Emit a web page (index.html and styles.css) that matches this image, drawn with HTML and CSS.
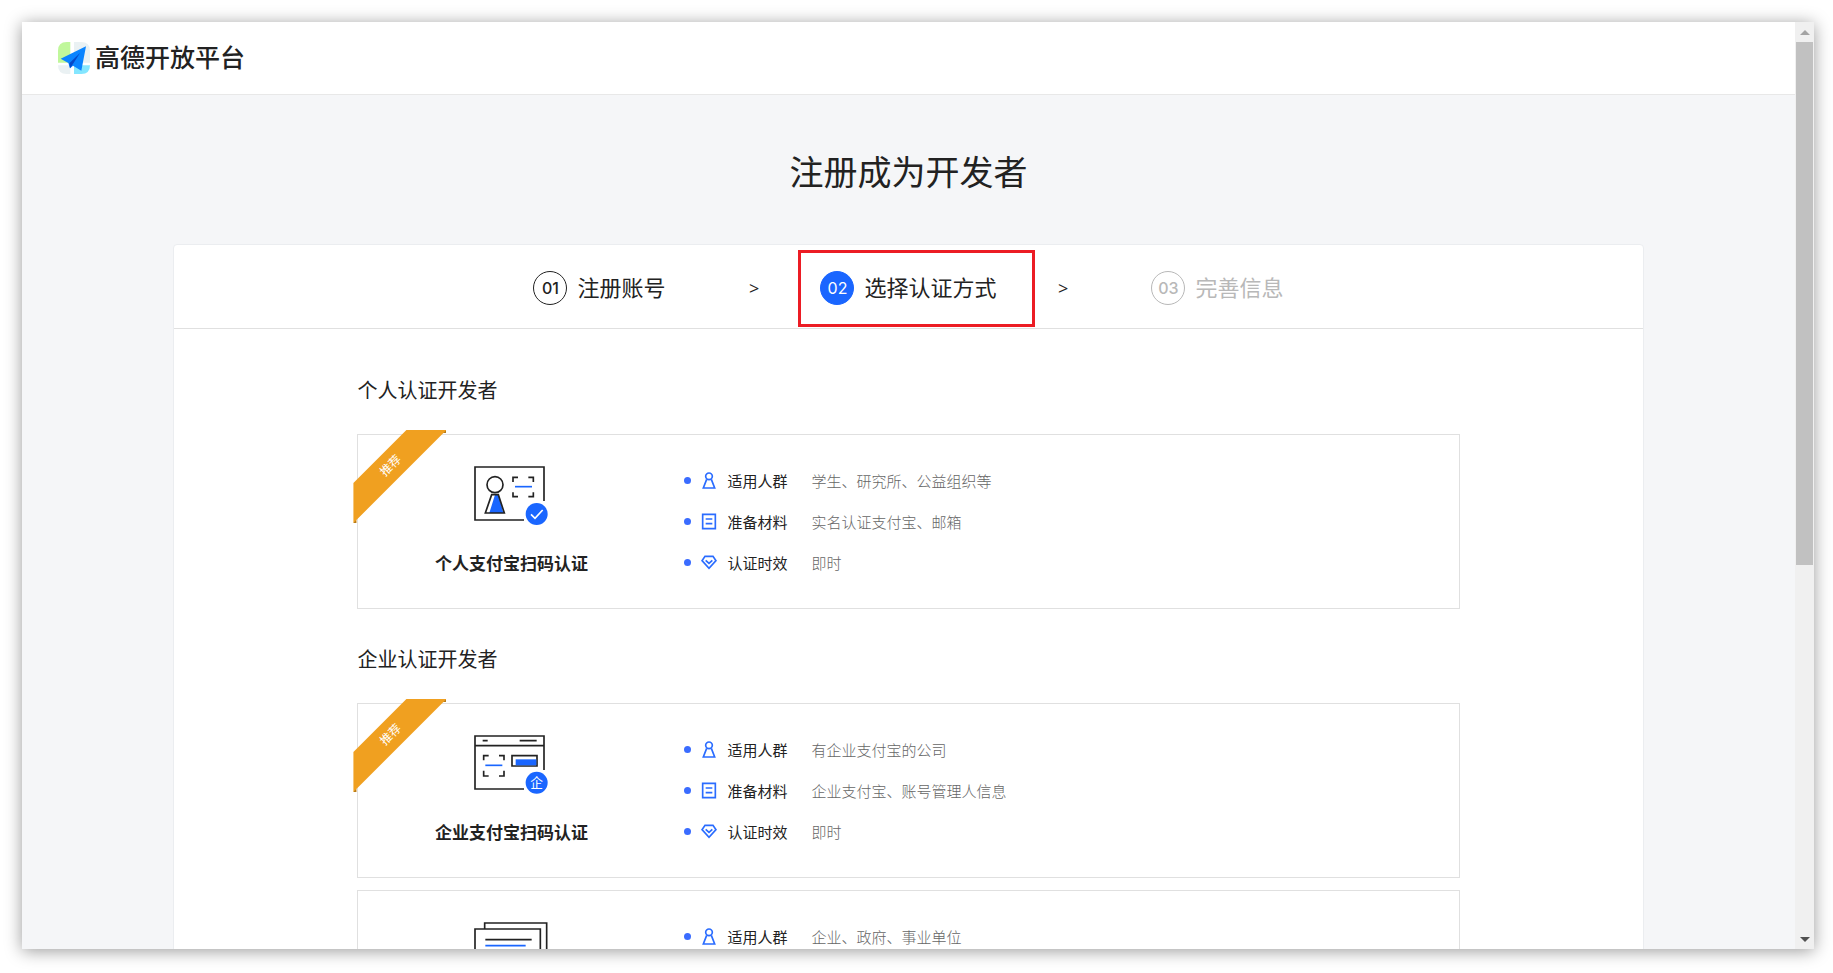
FILE: index.html
```
<!DOCTYPE html>
<html lang="zh-CN">
  <head>
    <meta charset="utf-8">
    <title>高德开放平台</title>
    <link rel="stylesheet" href="styles.css">
  </head>
  <body>
    <!-- shared icons -->
    <svg class="sprite" aria-hidden="true">
      <symbol id="icon-user" viewBox="0 0 48 51">
        <circle cx="24" cy="13" r="10"/>
        <path d="M17 22L7 48H41L31 22"/>
      </symbol>
      <symbol id="icon-doc" viewBox="0 0 48 51">
        <path d="M5 4H43V47H5ZM14 18H34M14 32H34"/>
      </symbol>
      <symbol id="icon-time" viewBox="0 0 48 51">
        <path d="M12 7H36L45 20L24 43L3 20ZM14 19L24 28L34 19"/>
      </symbol>
    </svg>
    <div class="window">
      <div class="page">
        <header class="header">
          <a class="logo" href="#">
            <svg class="logo-mark" viewBox="0 0 96 96">
              <path fill="#c0f79b" d="M26 0H37V62H0V26Q0 0 26 0Z"/>
              <path fill="#eaf1f3" d="M48 0H70Q96 0 96 26V62H48ZM0 70H37V96H26Q0 96 0 70Z"/>
              <path fill="#84e6ff" d="M48 70H96Q96 96 70 96H48Z"/>
              <path fill="#0a84ff" d="M84 13L8 50L31 63L36 79L45 71L70 86Z"/>
              <path fill="#0648c8" d="M66 33L34 64L36 79L43 69Z"/>
            </svg>
            <span>高德开放平台</span>
          </a>
        </header>
        <main>
          <h1>注册成为开发者</h1>
          <div class="panel">
            <ol class="steps">
              <li class="step"><span class="num">01</span>注册账号</li>
              <li class="arrow">&gt;</li>
              <li class="step current"><span class="num">02</span>选择认证方式</li>
              <li class="arrow">&gt;</li>
              <li class="step disabled"><span class="num">03</span>完善信息</li>
            </ol>
            <div class="content">
              <h2>个人认证开发者</h2>
              <div class="card">
                <div class="ribbon"><span>推荐</span></div>
                <div class="type">
                  <svg class="type-icon" viewBox="0 0 225 180">
                    <path class="line" d="M210 105V3H3V162H150"/>
                    <circle class="line" cx="63" cy="56" r="24"/>
                    <path class="blue" d="M63 86H74L88 141H46Z"/>
                    <path class="line" d="M53 86H73L91 141H34Z"/>
                    <path class="line" d="M117 48V34H132M163 34H178V48M178 79V92H163M132 92H117V79"/>
                    <path class="blue-line" d="M123 62H174"/>
                    <circle class="blue" cx="188" cy="144" r="33"/>
                    <path class="white-line" d="M171 145L183 157L206 132"/>
                  </svg>
                  <h3>个人支付宝扫码认证</h3>
                </div>
                <ul class="info">
                  <li><svg><use href="#icon-user"/></svg><b>适用人群</b><span>学生、研究所、公益组织等</span></li>
                  <li><svg><use href="#icon-doc"/></svg><b>准备材料</b><span>实名认证支付宝、邮箱</span></li>
                  <li><svg><use href="#icon-time"/></svg><b>认证时效</b><span>即时</span></li>
                </ul>
              </div>
              <h2>企业认证开发者</h2>
              <div class="card">
                <div class="ribbon"><span>推荐</span></div>
                <div class="type">
                  <svg class="type-icon" viewBox="0 0 225 180">
                    <path class="line" d="M210 105V3H3V162H150M3 32H210M26 17H41M137 17H188"/>
                    <path class="line" d="M29 76V62H44M75 62H90V76M90 107V123H75M44 123H29V107"/>
                    <path class="blue-line" d="M34 91H85"/>
                    <path class="line" d="M114 62H189V93H114Z"/>
                    <path class="blue" d="M125 73H187V91H125Z"/>
                    <circle class="blue" cx="188" cy="143" r="33"/>
                    <text class="badge-text" x="188" y="157">企</text>
                  </svg>
                  <h3>企业支付宝扫码认证</h3>
                </div>
                <ul class="info">
                  <li><svg><use href="#icon-user"/></svg><b>适用人群</b><span>有企业支付宝的公司</span></li>
                  <li><svg><use href="#icon-doc"/></svg><b>准备材料</b><span>企业支付宝、账号管理人信息</span></li>
                  <li><svg><use href="#icon-time"/></svg><b>认证时效</b><span>即时</span></li>
                </ul>
              </div>
              <div class="card">
                <div class="type">
                  <svg class="type-icon" viewBox="0 0 225 180">
                    <path class="line" d="M32 20V3H218V145H199M3 21H199V162H3ZM34 53H173"/>
                    <path class="blue-line" d="M34 71H155"/>
                  </svg>
                </div>
                <ul class="info">
                  <li><svg><use href="#icon-user"/></svg><b>适用人群</b><span>企业、政府、事业单位</span></li>
                </ul>
              </div>
            </div>
          </div>
        </main>
      </div>
      <div class="scrollbar" aria-hidden="true">
        <i class="up"></i>
        <div class="track"><div class="thumb"></div></div>
        <i class="down"></i>
      </div>
    </div>
  </body>
</html>
```
FILE: styles.css
```
*, ::before, ::after {
  box-sizing: border-box;
}
body {
  margin: 0;
  padding: 22px 19px 24px 22px;
  height: 100vh;
  overflow: hidden;
  background: #fff;
  color: #222;
  font-family: "Noto Sans CJK SC", sans-serif;
  font-size: 15px;
}
h1, h2, h3, ol, ul {
  margin: 0;
  padding: 0;
  list-style: none;
}
.sprite {
  position: absolute;
  width: 0;
  height: 0;
}
.window {
  display: flex;
  height: 100%;
  box-shadow: 0 2px 16px rgba(0, 0, 0, 0.4);
}
.page {
  flex: 1;
  overflow: hidden;
  background: #f5f6f8;
}

/* header */
.header {
  display: flex;
  align-items: center;
  height: 73px;
  padding: 0 36px;
  background: #fff;
  border-bottom: 1px solid #e8e8e8;
}
.logo {
  display: flex;
  align-items: flex-start;
  gap: 5px;
  color: #222;
  font-size: 25px;
  font-weight: 500;
  line-height: 29px;
  text-decoration: none;
}
.logo-mark {
  width: 32px;
  height: 32px;
}
h1 {
  padding: 52px 0 49px;
  font-size: 34px;
  font-weight: 400;
  line-height: 48px;
  text-align: center;
}

/* steps */
.panel {
  width: 83%;
  margin: 0 auto;
  background: #fff;
  border: 1px solid #ebedf0;
  border-radius: 4px;
}
.steps {
  display: flex;
  justify-content: center;
  align-items: center;
  height: 84px;
  padding-top: 2px;
  border-bottom: 1px solid #e0e0e0;
}
.step {
  position: relative;
  display: flex;
  justify-content: center;
  align-items: flex-start;
  gap: 10px;
  width: 299px;
  font-size: 22px;
  line-height: 30px;
}
.num {
  width: 34px;
  height: 34px;
  border: 1px solid #222;
  border-radius: 50%;
  font-family: Inter, sans-serif;
  font-size: 16px;
  font-weight: 500;
  line-height: 32px;
  text-align: center;
}
.current .num {
  color: #fff;
  background: #1a66ff;
  border-color: #1a66ff;
  font-weight: 400;
}
.current::after {
  content: "";
  position: absolute;
  top: -21px;
  left: 39px;
  width: 237px;
  height: 77px;
  border: 3px solid #ec1c24;
}
.disabled {
  color: #b8b8b8;
}
.disabled .num {
  border-color: #b8b8b8;
}
.arrow {
  width: 10px;
  font-family: "Open Sans", sans-serif;
  font-size: 18px;
}

/* cards */
.content {
  width: 75%;
  margin: 0 auto;
  padding: 11px 0 40px;
}
h2 {
  margin: 35px 0 29px;
  font-size: 20px;
  font-weight: 400;
  line-height: 30px;
}
.card {
  position: relative;
  display: flex;
  min-height: 175px;
  border: 1px solid #e0e0e0;
}
.card + .card {
  margin-top: 12px;
}
.type {
  display: flex;
  flex-direction: column;
  align-items: center;
  width: 306px;
  padding-top: 31px;
}
.type-icon {
  width: 75px;
  height: 60px;
}
h3 {
  margin-top: 25px;
  font-size: 17px;
  font-weight: 700;
  line-height: 24px;
}
.line, .blue-line, .white-line {
  fill: none;
  stroke: #222;
  stroke-width: 5;
}
.blue-line {
  stroke: #1a66ff;
}
.white-line {
  stroke: #fff;
}
.blue {
  fill: #1a66ff;
}
.badge-text {
  fill: #fff;
  font-size: 38px;
  text-anchor: middle;
}
.info {
  margin-left: 20px;
  padding: 25px 0;
}
.info li {
  display: flex;
  align-items: center;
  height: 41px;
}
.info li::before {
  content: "";
  width: 7px;
  height: 7px;
  margin-right: 10px;
  border-radius: 50%;
  background: #3a6cff;
}
.info svg {
  width: 16px;
  height: 17px;
  fill: none;
  stroke: #2a6cff;
  stroke-width: 5;
}
.info b {
  width: 94px;
  padding-left: 10px;
  font-weight: 400;
}
.info span {
  color: #666;
  font-weight: 300;
}

/* corner ribbon with its two folded ends */
.ribbon {
  position: absolute;
  top: -5px;
  left: -5px;
  width: 93px;
  height: 93px;
  background: #f0a020;
  clip-path: polygon(0 53px, 53px 0, 93px 0, 93px 3px, 90px 3px, 3px 90px, 3px 93px, 0 93px);
}
.ribbon::before {
  content: "";
  position: absolute;
  inset: 0;
  background: #b37a1c;
  clip-path: polygon(0 93px, 93px 0, 93px 3px, 90px 3px, 3px 90px, 3px 93px);
}
.ribbon span {
  position: absolute;
  top: 27px;
  left: 25px;
  color: #fff;
  font-size: 12px;
  line-height: 16px;
  transform: rotate(-45deg);
}

/* scrollbar */
.scrollbar {
  display: flex;
  flex-direction: column;
  width: 19px;
  padding: 0 1px;
  background: #f0f0f0;
}
.track {
  flex: 1;
}
.thumb {
  height: 59%;
  background: #c1c1c1;
}
.up, .down {
  display: flex;
  justify-content: center;
  align-items: center;
  height: 20px;
}
.up::before, .down::before {
  content: "";
  border: 5px solid transparent;
  border-top-width: 0;
  border-bottom-color: #a3a3a3;
}
.down::before {
  border-top: 5px solid #505050;
  border-bottom-width: 0;
}
```
